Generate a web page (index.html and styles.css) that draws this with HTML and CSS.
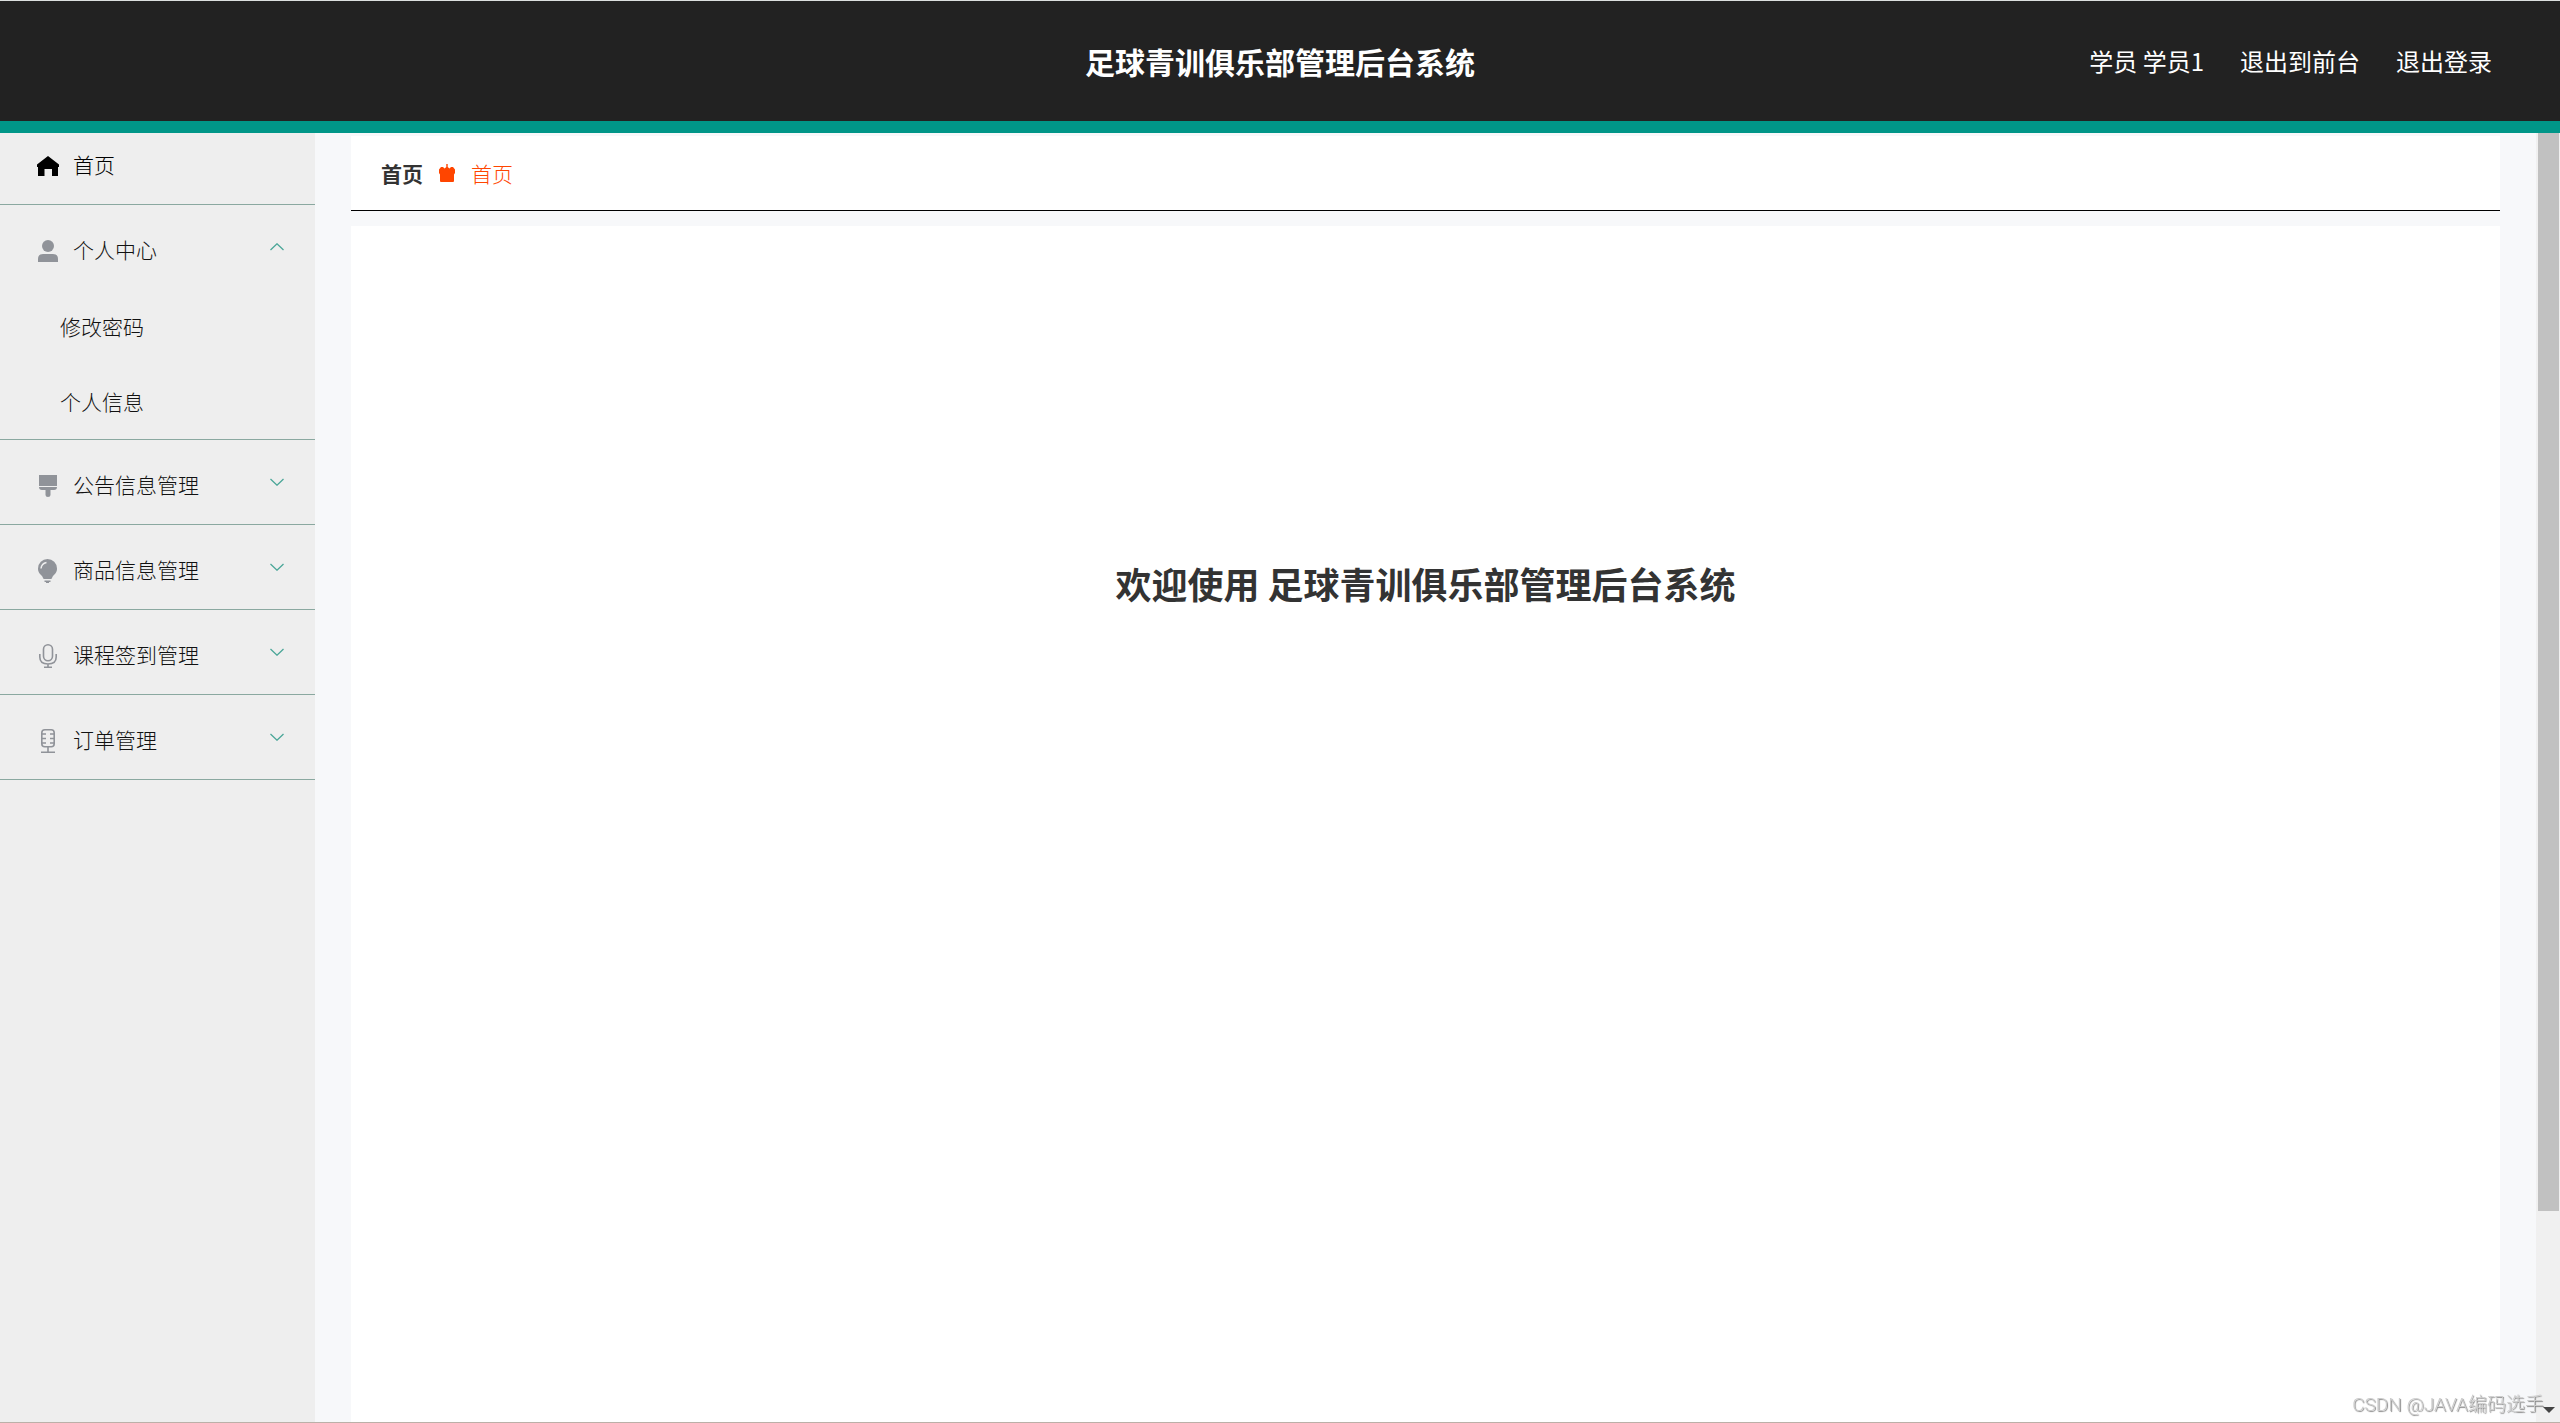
FILE: index.html
```html
<!DOCTYPE html>
<html lang="zh-CN">
<head>
<meta charset="utf-8">
<title>足球青训俱乐部管理后台系统</title>
<link rel="stylesheet" href="styles.css">
</head>
<body>
<header class="topbar">
  <h1 class="topbar-title">足球青训俱乐部管理后台系统</h1>
  <div class="topbar-links">
    <span>学员 学员1</span>
    <a href="#front">退出到前台</a>
    <a href="#logout">退出登录</a>
  </div>
</header>
<div class="layout">
  <nav class="sidebar">
    <a class="home-link" href="#home">
      <svg class="icon" viewBox="0 0 24 24"><path d="M12 2 23 10.500V13h-1v9H16v-7H8.500v7H2v-9H1v-2.500z"/></svg>
      <span class="label">首页</span>
    </a>
    <section class="group">
      <button class="group-head" type="button" aria-expanded="true">
        <svg class="icon" viewBox="0 0 24 24"><circle cx="12" cy="7" r="6"/><path d="M2 23v-3q0-5 5-5h10q5 0 5 5v3z"/></svg>
        <span class="label">个人中心</span>
        <svg class="chevron" viewBox="0 0 14 8"><path d="M.5 7 7 .800 13.500 7"/></svg>
      </button>
      <a class="sub-link" href="#password">修改密码</a>
      <a class="sub-link" href="#profile">个人信息</a>
    </section>
    <section class="group">
      <button class="group-head" type="button" aria-expanded="false">
        <svg class="icon" viewBox="0 0 24 24"><path d="M3 1h18v11H3zM3 13h18q0 3-3 3h-3.500v5q0 2-2.500 2t-2.500-2v-5H6q-3 0-3-3z"/></svg>
        <span class="label">公告信息管理</span>
        <svg class="chevron" viewBox="0 0 14 8"><path d="M.5 1 7 7.200 13.500 1"/></svg>
      </button>
    </section>
    <section class="group">
      <button class="group-head" type="button" aria-expanded="false">
        <svg class="icon" viewBox="0 0 24 24"><path d="M11.500 0a9.500 9.500 0 0 1 9.500 9.500c0 4-2 5.500-4 7.500-1 1-1 3-2 3H8c-1 0-1-2-2-3-2-2-4-3.500-4-7.500A9.500 9.500 0 0 1 11.500 0zM8.500 21.500h6V23H13v1h-3v-1H8.500z"/><path class="glint" d="M5 9.500Q5.500 4.500 10.500 3.500"/></svg>
        <span class="label">商品信息管理</span>
        <svg class="chevron" viewBox="0 0 14 8"><path d="M.5 1 7 7.200 13.500 1"/></svg>
      </button>
    </section>
    <section class="group">
      <button class="group-head" type="button" aria-expanded="false">
        <svg class="icon line" viewBox="0 0 24 24"><rect x="7.500" y=".800" width="9" height="16" rx="4.500"/><path d="M3.800 10v3q0 7 8.200 7t8.200-7v-3M12 20v3M8 23.200h8"/></svg>
        <span class="label">课程签到管理</span>
        <svg class="chevron" viewBox="0 0 14 8"><path d="M.5 1 7 7.200 13.500 1"/></svg>
      </button>
    </section>
    <section class="group">
      <button class="group-head" type="button" aria-expanded="false">
        <svg class="icon line" viewBox="0 0 24 24"><rect x="5.800" y=".800" width="12.400" height="17" rx="3"/><path d="M12 18v5M5 23.200h14M6 5h4M6 9.500h4M6 14h4M14 5h4M14 9.500h4M14 14h4"/></svg>
        <span class="label">订单管理</span>
        <svg class="chevron" viewBox="0 0 14 8"><path d="M.5 1 7 7.200 13.500 1"/></svg>
      </button>
    </section>
  </nav>
  <main class="content">
    <nav class="crumbs" aria-label="路径">
      <a class="crumb-root" href="#home">首页</a>
      <svg class="crumb-icon" viewBox="0 0 16 18"><path d="M7.300 0h1.400v3l1.800 1.500L12 3h2l2 2.500V9l-1 1.500V17q0 1-1 1H2q-1 0-1-1v-6.500L0 9V5.500L2 3h2l1.500 1.500L7.300 3z"/></svg>
      <span class="crumb-current">首页</span>
    </nav>
    <section class="panel">
      <h2 class="welcome">欢迎使用 足球青训俱乐部管理后台系统</h2>
    </section>
  </main>
  <div class="scroll-track" aria-hidden="true">
    <div class="scroll-thumb"></div>
    <div class="scroll-rest"><svg class="scroll-arrow" viewBox="0 0 12 6"><path d="M0 0h12L6 6z"/></svg></div>
  </div>
</div>
<div class="watermark">CSDN @JAVA编码选手</div>
</body>
</html>
```

FILE: styles.css
```css
* { box-sizing: border-box; }

body {
  margin: 0;
  min-height: 100vh;
  display: flex;
  flex-direction: column;
  border-top: 1px solid #dce0df;
  border-bottom: 1px solid #bbb0a8;
  background: #f7f8fa;
  color: #333;
  font-family: "Noto Sans CJK SC", sans-serif;
  font-size: 21px;
  font-weight: 300;
  line-height: 30px;
}

a { color: inherit; text-decoration: none; }

.topbar {
  display: grid;
  grid-template-columns: 1fr auto 1fr;
  align-items: center;
  height: 132px;
  padding: 0 68px;
  background: #222;
  border-bottom: 12px solid #009688;
  color: #fff;
}

.topbar-title {
  grid-column: 2;
  margin: 0;
  font-size: 30px;
  line-height: 44px;
  font-weight: 700;
}

.topbar-links {
  display: flex;
  justify-content: flex-end;
  gap: 36px;
  font-size: 24px;
  font-weight: 400;
  line-height: 36px;
}

.layout {
  flex: 1;
  display: flex;
}

.sidebar {
  flex: 0 0 315px;
  background: #eee;
  color: #111;
}

.home-link,
.group-head {
  display: flex;
  align-items: center;
  gap: 13px;
  width: 100%;
  padding: 0 31px 0 36px;
}

.home-link {
  height: 72px;
  padding-bottom: 6px;
  border-bottom: 1px solid #8aa8a0;
  color: #000;
}

.label { padding-bottom: 4px; }

.group { border-bottom: 1px solid #8aa8a0; }

.group-head {
  height: 84px;
  padding-top: 7px;
  border: 0;
  background: none;
  color: inherit;
  font: inherit;
  text-align: left;
}

.icon {
  width: 24px;
  height: 24px;
  fill: #909399;
}

.home-link .icon { fill: #000; }

.icon.line {
  fill: none;
  stroke: #909399;
  stroke-width: 1.6;
}

.icon .glint {
  fill: none;
  stroke: #eee;
  stroke-width: 1.5;
}

.chevron {
  width: 14px;
  height: 8px;
  margin: 0 0 7px auto;
  fill: none;
  stroke: #4aa698;
  stroke-width: 1.3;
}

.sub-link {
  display: block;
  padding-left: 60px;
  line-height: 75px;
}

.content {
  flex: 1;
  display: flex;
  flex-direction: column;
  gap: 15px;
  padding: 3px 36px 0;
}

.crumbs {
  display: flex;
  align-items: center;
  gap: 16px;
  height: 75px;
  padding: 0 30px;
  background: #fff;
  border-bottom: 1px solid #000;
}

.crumb-root { font-weight: 700; }

.crumb-icon {
  width: 16px;
  height: 18px;
  fill: #ff4500;
}

.crumb-current { color: #ff4500; }

.panel {
  flex: 1;
  padding-top: 331px;
  background: #fff;
  text-align: center;
}

.welcome {
  margin: 0;
  font-size: 36px;
  font-weight: 700;
  line-height: 52px;
}

.scroll-track {
  flex: 0 0 24px;
  display: flex;
  flex-direction: column;
  padding: 0 1px 0 2px;
  background: #f0f0f0;
}

.scroll-thumb {
  flex: 1078 0 0;
  background: #c1c1c1;
}

.scroll-rest {
  flex: 202 0 0;
  display: flex;
  align-items: flex-end;
  justify-content: center;
  padding-bottom: 9px;
}

.scroll-arrow {
  width: 12px;
  height: 6px;
  fill: #444;
}

.watermark {
  position: fixed;
  right: 16px;
  bottom: 3px;
  color: #ccc;
  font-family: Roboto, "Noto Sans CJK SC", sans-serif;
  font-size: 19px;
  font-weight: 300;
  text-shadow: 1px 1px 1px #888;
}
```
